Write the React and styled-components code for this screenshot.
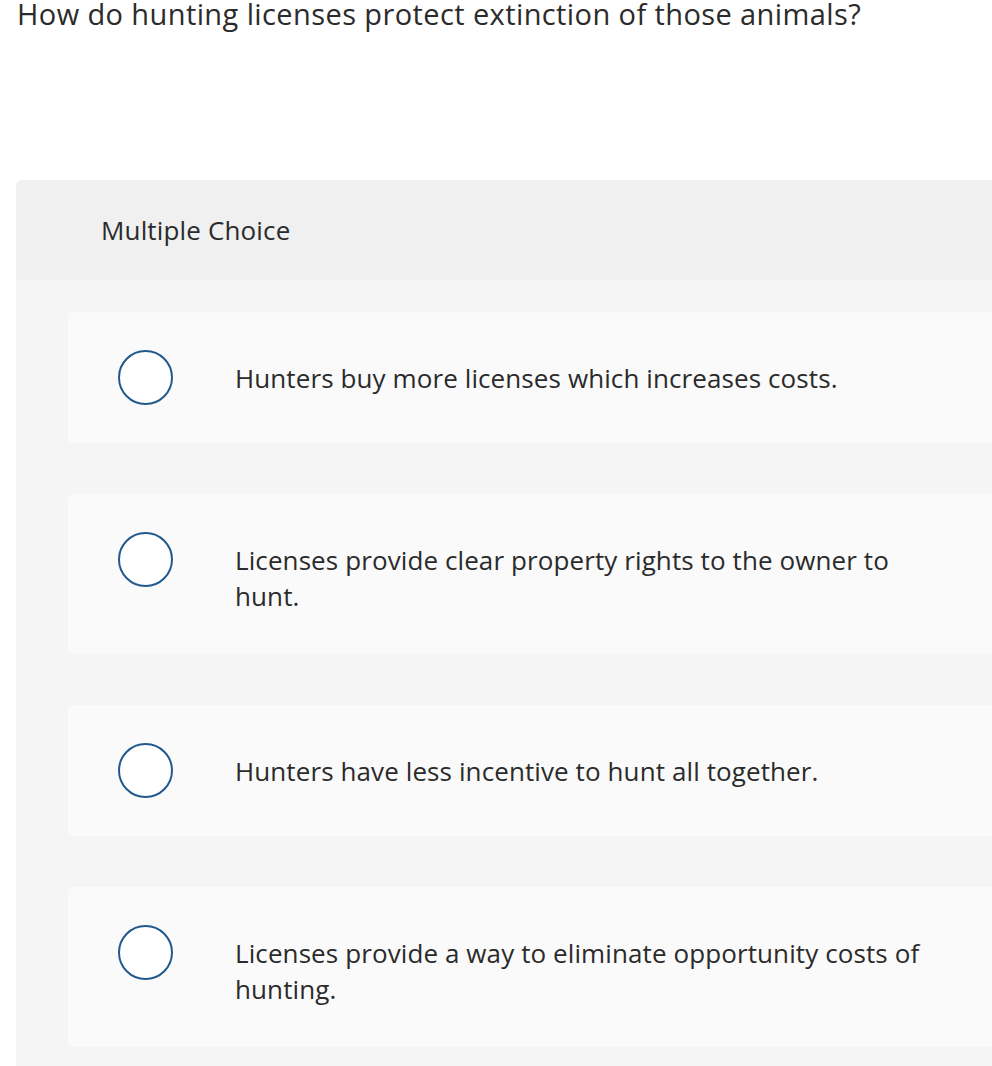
import React from "react";
import styled, { createGlobalStyle } from "styled-components";

const Global = createGlobalStyle`
  html, body { margin: 0; padding: 0; background: #fff; }
  body { font-family: "Open Sans", "Noto Sans", sans-serif; color: #2b2b2b; }
`;

const Page = styled.div`
  padding-left: 16px;
  overflow: hidden;
`;

const Question = styled.h1`
  margin: 0;
  padding: 0 0 0 1px;
  font-size: 29px;
  font-weight: 400;
  line-height: 28px;
  letter-spacing: 0.4px;
  color: #2b2b2b;
`;

const Panel = styled.section`
  margin: 152px -240px 0 0;
  background: #f5f5f5;
  border-radius: 6px 0 0 0;
  overflow: hidden;
  padding-bottom: 19px;
`;

const PanelHeader = styled.div`
  height: 100px;
  display: flex;
  align-items: center;
  padding-left: 85px;
  background: #f0f0f0;
  font-size: 26px;
  letter-spacing: 0.15px;
`;

const Options = styled.div`
  display: flex;
  flex-direction: column;
  gap: 51px;
  padding: 32px 0 0 52px;
`;

const OptionCard = styled.label`
  display: flex;
  align-items: flex-start;
  padding: 38px 0;
  background: #fafafa;
  border-radius: 5px 0 0 5px;
  cursor: pointer;
`;

const Radio = styled.span`
  flex: none;
  width: 51px;
  height: 51px;
  margin-left: 50px;
  border: 2px solid #22598c;
  border-radius: 50%;
  background: #fff;
`;

const OptionText = styled.span`
  margin: 10px 0 2px 62px;
  max-width: 695px;
  font-size: 26px;
  line-height: 36px;
  letter-spacing: 0.1px;
  color: #2b2b2b;
`;

const options = [
  "Hunters buy more licenses which increases costs.",
  "Licenses provide clear property rights to the owner to hunt.",
  "Hunters have less incentive to hunt all together.",
  "Licenses provide a way to eliminate opportunity costs of hunting.",
];

export default function App() {
  return (
    <>
      <Global />
      <Page>
        <Question>How do hunting licenses protect extinction of those animals?</Question>
        <Panel>
          <PanelHeader>Multiple Choice</PanelHeader>
          <Options>
            {options.map((o) => (
              <OptionCard key={o}>
                <Radio />
                <OptionText>{o}</OptionText>
              </OptionCard>
            ))}
          </Options>
        </Panel>
      </Page>
    </>
  );
}
